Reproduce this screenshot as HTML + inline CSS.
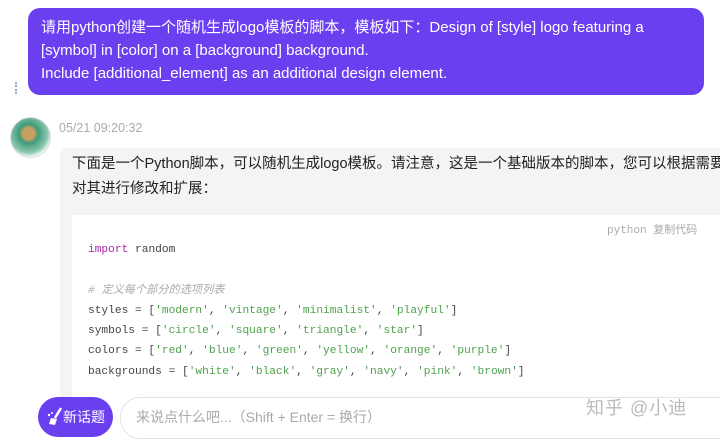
<!DOCTYPE html>
<html><head><meta charset="utf-8"><style>
body{margin:0;width:720px;height:437px;overflow:hidden;background:#fff;font-family:"Liberation Sans","Noto Sans CJK SC",sans-serif;position:relative}
.q{position:absolute;left:28px;top:8px;width:676px;height:87px;background:#6a3ff0;border-radius:12px;color:#fff;font-size:15px;line-height:23px;padding:8px 0 0 13px;box-sizing:border-box;white-space:nowrap}
.dots{position:absolute;left:15px;top:82px;width:2px;height:12px;border-left:2px dotted #9ab}
.av{position:absolute;left:10px;top:117px;width:41px;height:41px;border-radius:50%;background:radial-gradient(circle at 45% 40%,#c9a060 0 18%,#3f9a7a 30%,#8cc8b0 60%,#fff 75%);border:1px solid #ddd;box-sizing:border-box}
.ts{position:absolute;left:59px;top:121px;color:#aaa;font-size:12.5px}
.a{position:absolute;left:60px;top:148px;width:680px;height:260px;background:#f4f4f4;border-radius:8px}
.at{position:absolute;left:72px;top:152px;font-size:14.5px;line-height:25px;color:#222;white-space:nowrap}
.code{position:absolute;left:72px;top:215px;width:660px;height:200px;background:#fff}
pre{margin:0;position:absolute;left:88px;top:240px;font-family:"Liberation Mono","Noto Sans CJK SC",monospace;font-size:11.2px;line-height:20.3px;color:#444}
.k{color:#a626a4}.s{color:#50a14f}.c{color:#aaa;font-style:italic}
.lab{position:absolute;left:607px;top:221px;font-family:"Liberation Mono","Noto Sans CJK SC",monospace;font-size:11px;color:#aaa}
.btn{position:absolute;left:38px;top:397px;width:75px;height:40px;border-radius:20px;background:#6a3ff0;color:#fff;font-size:14px;line-height:40px;text-align:right;padding-right:8px;box-sizing:border-box}
.in{position:absolute;left:120px;top:397px;width:620px;height:42px;border:1px solid #e3e3e3;border-radius:20px;box-sizing:border-box;color:#aaa;font-size:14px;line-height:38px;padding-left:15px;background:#fff}
.wm{position:absolute;left:586px;top:394px;font-size:18px;color:#bbb;letter-spacing:1px}
</style></head><body>
<div class="q">请用python创建一个随机生成logo模板的脚本，模板如下：Design of [style] logo featuring a<br>[symbol] in [color] on a [background] background.<br>Include [additional_element] as an additional design element.</div>
<div class="dots"></div>
<div class="av"></div>
<div class="ts">05/21 09:20:32</div>
<div class="a"></div>
<div class="at">下面是一个Python脚本，可以随机生成logo模板。请注意，这是一个基础版本的脚本，您可以根据需要<br>对其进行修改和扩展：</div>
<div class="code"></div>
<div class="lab">python 复制代码</div>
<pre><span class="k">import</span> random

<span class="c"># 定义每个部分的选项列表</span>
styles = [<span class="s">'modern'</span>, <span class="s">'vintage'</span>, <span class="s">'minimalist'</span>, <span class="s">'playful'</span>]
symbols = [<span class="s">'circle'</span>, <span class="s">'square'</span>, <span class="s">'triangle'</span>, <span class="s">'star'</span>]
colors = [<span class="s">'red'</span>, <span class="s">'blue'</span>, <span class="s">'green'</span>, <span class="s">'yellow'</span>, <span class="s">'orange'</span>, <span class="s">'purple'</span>]
backgrounds = [<span class="s">'white'</span>, <span class="s">'black'</span>, <span class="s">'gray'</span>, <span class="s">'navy'</span>, <span class="s">'pink'</span>, <span class="s">'brown'</span>]</pre>
<div class="btn"><svg style="position:absolute;left:9px;top:10px" width="16" height="20" viewBox="0 0 16 20"><path d="M14 1 L8 11" stroke="#fff" stroke-width="2.5"/><path d="M4 11 L10 12 L8 18 L2 17 Z" fill="#fff"/><circle cx="2" cy="8" r="1.2" fill="#fff"/><circle cx="5" cy="6" r="1" fill="#fff"/></svg>新话题</div>
<div class="in">来说点什么吧...（Shift + Enter = 换行）</div>
<div class="wm">知乎 @小迪</div>
</body></html>
